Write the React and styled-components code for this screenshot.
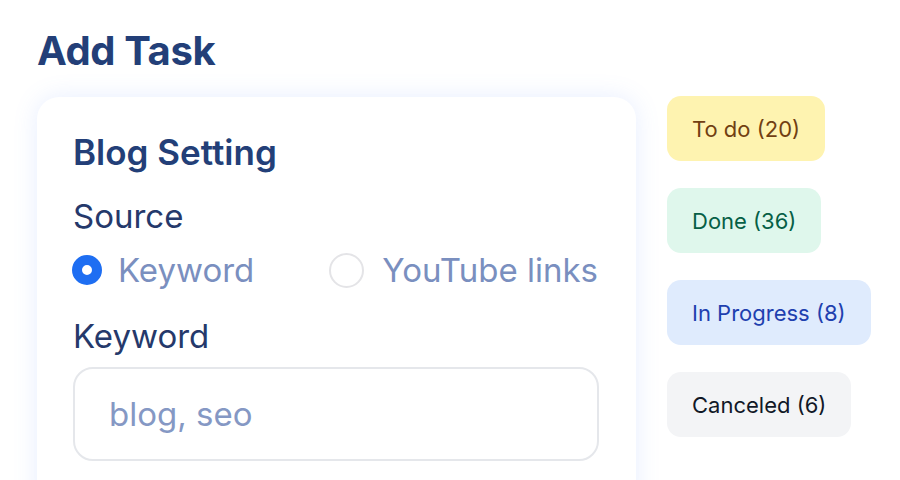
import React, { useState } from 'react';
import { styled, createGlobalStyle } from 'styled-components';

const GlobalStyle = createGlobalStyle`
  html, body {
    margin: 0;
    padding: 0;
    background: #ffffff;
    font-family: Inter, "Noto Sans", sans-serif;
  }
`;

const statuses = [
  { label: 'To do (20)', bg: '#fef3b0', color: '#713f12' },
  { label: 'Done (36)', bg: '#dff7ec', color: '#065f46' },
  { label: 'In Progress (8)', bg: '#dfebfd', color: '#1e40af' },
  { label: 'Canceled (6)', bg: '#f3f4f6', color: '#111827' },
];

function App() {
  const [source, setSource] = useState('keyword');

  return (
    <Page>
      <GlobalStyle />
      <Title>Add Task</Title>
      <Row>
        <Card>
          <Heading>Blog Setting</Heading>
          <Label>Source</Label>
          <RadioRow>
            <RadioOption $gap="16px" onClick={() => setSource('keyword')}>
              <Radio $checked={source === 'keyword'} />
              <RadioText>Keyword</RadioText>
            </RadioOption>
            <RadioOption $gap="18px" onClick={() => setSource('youtube')}>
              <Radio $checked={source === 'youtube'} />
              <RadioText>YouTube links</RadioText>
            </RadioOption>
          </RadioRow>
          <FieldLabel>Keyword</FieldLabel>
          <Input placeholder="blog, seo" />
        </Card>

        <Badges>
          {statuses.map((s) => (
            <Badge key={s.label} $bg={s.bg} $color={s.color}>
              {s.label}
            </Badge>
          ))}
        </Badges>
      </Row>
    </Page>
  );
}

const Page = styled.div`
    padding: 27px 0 0 37px;
    height: 480px;
    box-sizing: border-box;
    overflow: hidden;
`;

const Title = styled.h1`
    margin: 0;
    font-size: 40px;
    line-height: 48px;
    font-weight: 700;
    color: #233f78;
    letter-spacing: -0.4px;
`;

const Row = styled.div`
    display: flex;
    align-items: flex-start;
    gap: 31px;
    margin-top: 22px;
`;

const Card = styled.div`
    width: 599px;
    height: 420px;
    box-sizing: border-box;
    padding: 35px 36px 0 36px;
    background: #ffffff;
    border-radius: 22px;
    box-shadow: 0 0 24px rgba(96, 140, 255, 0.15);
    display: flex;
    flex-direction: column;
`;

const Heading = styled.div`
    font-size: 35px;
    line-height: 40px;
    font-weight: 600;
    color: #233f78;
`;

const Label = styled.div`
    margin-top: 24px;
    font-size: 33px;
    line-height: 40px;
    color: #25396b;
`;

const FieldLabel = styled(Label)`
    margin-top: 26px;
`;

const RadioRow = styled.div`
    display: flex;
    align-items: center;
    gap: 75px;
    margin-top: 14px;
    height: 40px;
    margin-left: -1px;
`;

const RadioOption = styled.label`
    display: flex;
    align-items: center;
    gap: ${(p) => p.$gap};
    cursor: pointer;
`;

const Radio = styled.span`
    box-sizing: border-box;
    display: block;
    flex: none;
    border-radius: 50%;
    width: ${(p) => (p.$checked ? '30px' : '35px')};
    height: ${(p) => (p.$checked ? '30px' : '35px')};
    border: ${(p) => (p.$checked ? '10px solid #1e6ef2' : '2.5px solid #e4e4e7')};
    background: #ffffff;
`;

const RadioText = styled.span`
    font-size: 33px;
    line-height: 40px;
    color: #7a8fbf;
`;

const Input = styled.input`
    margin-top: 11px;
    width: 526px;
    height: 94px;
    box-sizing: border-box;
    border: 2px solid #e5e7eb;
    border-radius: 20px;
    padding: 0 34px;
    font-family: Inter, "Noto Sans", sans-serif;
    font-size: 33px;
    color: #25396b;
    outline: none;

    &::placeholder {
        color: #8598c4;
    }
`;

const Badges = styled.div`
    display: flex;
    flex-direction: column;
    align-items: flex-start;
    gap: 27px;
    margin-top: -1px;
`;

const Badge = styled.div`
    height: 65px;
    display: flex;
    align-items: center;
    padding: 0 25px;
    border-radius: 14px;
    background: ${(p) => p.$bg};
    color: ${(p) => p.$color};
    font-size: 22px;
    font-weight: 400;
`;

export default App;
